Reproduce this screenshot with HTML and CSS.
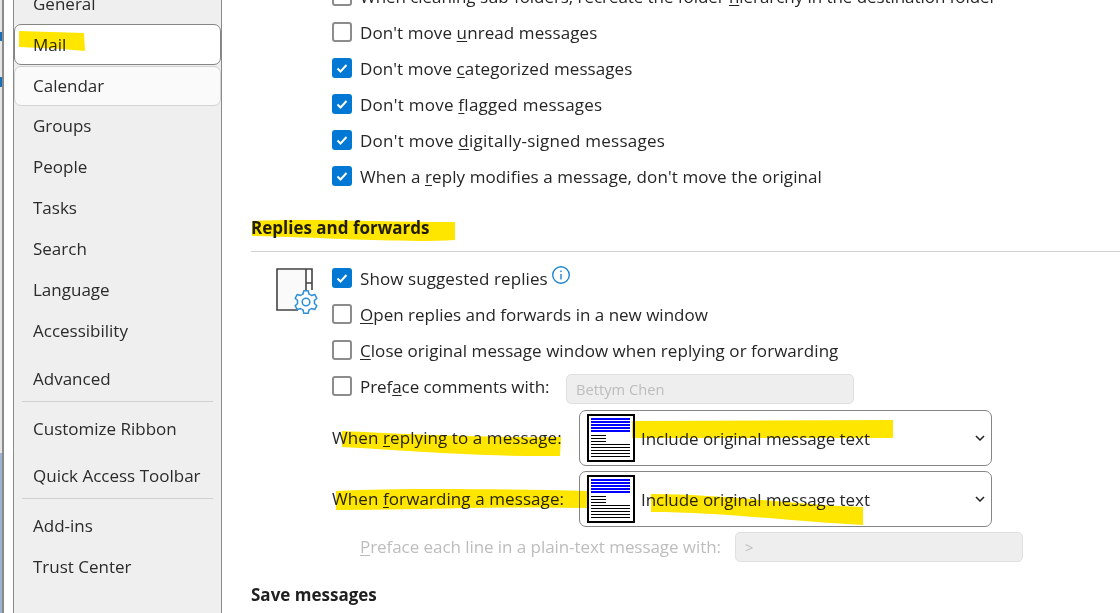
FILE: index.html
```html
<!DOCTYPE html>
<html lang="en">
<head>
<meta charset="utf-8">
<title>Outlook Options</title>
<link rel="stylesheet" href="styles.css">
</head>
<body>
<div class="window">
  <div class="edge"></div>
  <nav class="side">
    <div class="nav-item nav-first">General</div>
    <div class="nav-item nav-active">Mail</div>
    <div class="nav-item nav-hover">Calendar</div>
    <div class="nav-item">Groups</div>
    <div class="nav-item">People</div>
    <div class="nav-item">Tasks</div>
    <div class="nav-item">Search</div>
    <div class="nav-item">Language</div>
    <div class="nav-item">Accessibility</div>
    <div class="nav-item nav-adv">Advanced</div>
    <div class="nav-sep"></div>
    <div class="nav-item">Customize Ribbon</div>
    <div class="nav-item nav-qat">Quick Access Toolbar</div>
    <div class="nav-sep"></div>
    <div class="nav-item">Add-ins</div>
    <div class="nav-item">Trust Center</div>
  </nav>
  <main class="content">
    <div class="top-opts">
      <label class="opt"><span class="box"></span><span class="fit-c">When cleaning sub-folders, recreate the folder <u>h</u>ierarchy in the destination folder</span></label>
      <label class="opt"><span class="box"></span><span class="fit-b">Don't move <u>u</u>nread messages</span></label>
      <label class="opt"><span class="box on"><svg viewBox="0 0 20 20"><path d="M5.500 10.500l3 3 6-6.500"/></svg></span><span class="fit-b">Don't move <u>c</u>ategorized messages</span></label>
      <label class="opt"><span class="box on"><svg viewBox="0 0 20 20"><path d="M5.500 10.500l3 3 6-6.500"/></svg></span><span class="fit-a">Don't move <u>f</u>lagged messages</span></label>
      <label class="opt"><span class="box on"><svg viewBox="0 0 20 20"><path d="M5.500 10.500l3 3 6-6.500"/></svg></span><span class="fit-a">Don't move <u>d</u>igitally-signed messages</span></label>
      <label class="opt"><span class="box on"><svg viewBox="0 0 20 20"><path d="M5.500 10.500l3 3 6-6.500"/></svg></span><span class="fit-b">When a <u>r</u>eply modifies a message, don't move the original</span></label>
    </div>
    <h2 class="head head-replies">Replies and forwards</h2>
    <div class="rule"></div>
    <div class="section">
      <svg class="sec-icon" viewBox="0 0 48 48">
        <path class="page-fill" d="M1 1H30V42H1Z"/>
        <path class="page-line" d="M36 22V1H1V42H22"/>
        <path class="page-line" d="M30 1V22M30 15H36"/>
        <g class="gear" transform="translate(30 34)">
          <circle class="gear-bg" r="9"/>
          <path id="tooth" d="M-4.250-7.360L-2.950-8L-2.200-11.300H2.200L2.950-8L4.250-7.360"/>
          <use href="#tooth" transform="rotate(60)"/>
          <use href="#tooth" transform="rotate(120)"/>
          <use href="#tooth" transform="rotate(180)"/>
          <use href="#tooth" transform="rotate(240)"/>
          <use href="#tooth" transform="rotate(300)"/>
          <circle class="gear-hole" r="3.800"/>
        </g>
      </svg>
      <div class="sec-body">
        <label class="opt"><span class="box on"><svg viewBox="0 0 20 20"><path d="M5.500 10.500l3 3 6-6.500"/></svg></span><span class="fit-b">Show suggested replies</span><svg class="info" viewBox="0 0 20 20"><circle cx="10" cy="10" r="8.300"/><path d="M10 9v5.500"/><path d="M10 5.500v1.600"/></svg></label>
        <label class="opt"><span class="box"></span><span><u>O</u>pen replies and forwards in a new window</span></label>
        <label class="opt"><span class="box"></span><span class="fit-d"><u>C</u>lose original message window when replying or forwarding</span></label>
        <div class="opt">
          <span class="box"></span><span class="preface-label fit-c">Pref<u>a</u>ce comments with:</span>
          <div class="field name-field">Bettym Chen</div>
        </div>
        <div class="select-row row-reply">
          <span class="select-label fit-b">When <u>r</u>eplying to a message:</span>
          <div class="select">
            <svg class="thumb" viewBox="0 0 48 48"><use href="#thumb"/></svg>
            <span class="select-text fit-c">Include original message text</span>
            <svg class="chev" viewBox="0 0 10 6"><path d="M1 1l4 4 4-4"/></svg>
          </div>
        </div>
        <div class="select-row row-forward">
          <span class="select-label fit-b">When <u>f</u>orwarding a message:</span>
          <div class="select">
            <svg class="thumb" viewBox="0 0 48 48"><use href="#thumb"/></svg>
            <span class="select-text fit-c">Include original message text</span>
            <svg class="chev" viewBox="0 0 10 6"><path d="M1 1l4 4 4-4"/></svg>
          </div>
        </div>
        <div class="preface-row">
          <span class="muted fit-c"><u>P</u>reface each line in a plain-text message with:</span>
          <div class="field prefix-field">&gt;</div>
        </div>
      </div>
    </div>
    <h2 class="head head-save">Save messages</h2>
  </main>
</div>
<svg class="defs" width="0" height="0">
  <defs>
    <g id="thumb">
      <rect x="0" y="0" width="48" height="48" fill="#000"/>
      <rect x="2" y="2" width="44" height="44" fill="#fff"/>
      <path d="M4 5H43M4 8H43M4 11H43M4 14H43M4 17H43" stroke="#0000ff" stroke-width="2" fill="none"/>
      <path d="M4 21.500H19M4 24.500H19M4 27.500H19M4 30.500H43M4 33.500H43M4 36.500H43M4 39.500H43M4 42.500H43" stroke="#000" fill="none"/>
    </g>
  </defs>
</svg>
<svg class="ink" viewBox="0 0 1120 613" aria-hidden="true">
  <path d="M19 31 L84 33 L85 51 L62 49 L19 47Z"/>
  <path d="M252 221 C300 218 380 222 455 222 L455 240 C400 243 340 238 252 236Z"/>
  <path d="M342 431 C400 434 500 438 561 437 L560 456 C480 457 400 450 342 447Z"/>
  <path d="M336 491 C400 488 500 489 589 491 L589 508 C500 506 420 510 336 510Z"/>
  <path d="M632 421 L893 420 L893 438 L632 438Z"/>
  <path d="M651 494 C720 494 800 505 863 507 L863 525 C800 522 720 512 651 512Z"/>
</svg>
</body>
</html>
```
FILE: styles.css
```css
* { box-sizing: border-box; }
html, body { margin: 0; height: 100%; overflow: hidden; }
body { background: #fff; font-family: "Open Sans", "Noto Sans", sans-serif; color: #262626; font-size: 17px; }
.window { display: flex; width: 1120px; height: 613px; overflow: hidden; }
.edge {
  width: 14px; flex: none;
  border-right: 1px solid #8a8a8a;
  background:
    linear-gradient(#8a8a8a, #8a8a8a) 2px 0 / 2px 100% no-repeat,
    linear-gradient(#e6e6e6 0 32px, #1a6fb5 32px 41px, #e6e6e6 41px 77px, #1a6fb5 77px 87px, #e6e6e6 87px 453px, #9db3cf 453px) 0 0 / 2px 100% no-repeat,
    #fff;
}
.side { width: 208px; flex: none; background: #efefef; border-right: 1px solid #8a8a8a; display: flex; flex-direction: column; height: 613px; overflow: hidden; }
.nav-item { height: 41px; flex: none; display: flex; align-items: center; padding: 0 0 0 19px; color: #2b2b2b; }
.nav-first { margin-top: -17px; }
.nav-active { background: #fff; border: 1px solid #858585; border-radius: 7px; padding-left: 18px; }
.nav-hover { background: #fafafa; border: 1px solid #d2d2d2; border-radius: 7px; height: 40px; margin: 1px 0 -1px; padding: 0 0 2px 18px; }
.nav-adv { margin-top: 7px; }
.nav-sep { height: 1px; flex: none; background: #d0d0d0; margin: 2px 8px 6px 8px; }
.nav-qat { margin-top: 6px; }
.content { flex: 1; min-width: 0; padding-left: 29px; }
.top-opts { margin-top: -22px; padding-left: 81px; display: flex; flex-direction: column; }
.opt { display: flex; align-items: center; height: 36px; white-space: nowrap; }
.opt > span:not(.box) { padding-top: 1px; }
.fit-a { letter-spacing: .25px; }
.fit-b { letter-spacing: .09px; }
.fit-c { letter-spacing: -.06px; }
.fit-d { letter-spacing: .05px; }
.box { width: 20px; height: 20px; flex: none; margin-right: 8px; border: 2px solid #8c8c8c; border-radius: 3px; background: #fff; display: inline-flex; }
.box.on { background: #0078d4; border: 0; }
.box svg { width: 20px; height: 20px; }
.box path { fill: none; stroke: #fff; stroke-width: 2; }
.head { margin: 0; font-size: 17px; font-weight: 700; color: #1f1f1f; line-height: 23px; }
.head-replies { margin-top: 22px; }
.rule { height: 1px; background: #d2d2d2; margin-top: 12px; }
.section { display: flex; margin-top: 8px; }
.sec-icon { width: 48px; height: 48px; flex: none; margin: 8px 8px 0 25px; overflow: visible; }
.page-fill { fill: #fafafa; }
.page-line { fill: none; stroke: #444; stroke-width: 1.600; }
.gear path, .gear use { fill: none; stroke: #2d8fd5; stroke-width: 1.500; stroke-linejoin: round; }
.gear-bg { fill: #fff; }
.gear-hole { fill: none; stroke: #2d8fd5; stroke-width: 1.500; }
.sec-body { flex: 1; min-width: 0; }
.info { width: 20px; height: 20px; margin: -6px 0 0 3px; fill: none; stroke: #1f86d0; stroke-width: 1.400; flex: none; }
.field { background: #eeeeee; border: 1px solid #e0e0e0; border-radius: 5px; color: #bdbdbd; display: flex; align-items: center; padding-left: 9px; height: 30px; font-size: 14.700px; }
.preface-label { width: 206px; flex: none; }
.name-field { width: 288px; margin-top: 6px; }
.select-row { display: flex; align-items: center; height: 56px; margin-bottom: 5px; }
.row-reply { margin-top: 6px; }
.select-label { width: 247px; flex: none; white-space: nowrap; padding-bottom: 1px; }
.select { width: 413px; height: 56px; flex: none; border: 1px solid #858585; border-radius: 7px; background: #fff; display: flex; align-items: center; padding: 0 6px 0 7px; }
.thumb { width: 48px; height: 48px; flex: none; }
.select-text { flex: 1; margin-left: 6px; white-space: nowrap; padding-top: 1px; }
.chev { width: 10px; height: 6px; fill: none; stroke: #222; stroke-width: 1.500; }
.preface-row { display: flex; align-items: center; height: 30px; padding-left: 28px; }
.muted { color: #bdbdbd; white-space: nowrap; width: 375px; flex: none; padding-bottom: 1px; }
.prefix-field { width: 288px; }
.head-save { margin-top: 21px; }
.defs { position: absolute; }
.ink { position: absolute; left: 0; top: 0; width: 1120px; height: 613px; pointer-events: none; mix-blend-mode: multiply; }
.ink path { fill: #ffe600; }
u { text-underline-offset: 2px; text-decoration-thickness: 1px; }
```
